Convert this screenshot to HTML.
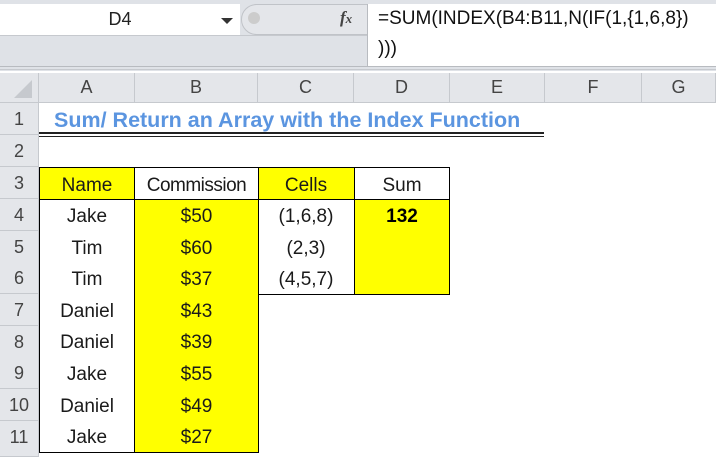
<!DOCTYPE html><html style="width:716px;height:457px;overflow:hidden"><head><style>
body{margin:0;width:716px;height:457px;overflow:hidden;background:#fff;font-family:"Liberation Sans",Calibri,sans-serif;position:relative}
div{position:absolute;box-sizing:border-box}
.t{font-size:19px;color:#1a1a1a;text-align:center;line-height:31.6px;white-space:nowrap}
.hd{background:#e4e6ea;border-right:1px solid #c6c9ce;border-bottom:1px solid #c6c9ce;color:#444;font-size:18px;text-align:center;line-height:29px}
.rh{background:#e4e6ea;border-bottom:1px solid #c6c9ce;border-right:1px solid #c6c9ce;color:#444;font-size:18px;text-align:center;width:39px;left:0;height:32px;line-height:32px}
</style></head><body>
<div style="left:0;top:0;width:716px;height:72px;background:#dfe2e7"></div>
<div style="left:0;top:4px;width:240px;height:31px;background:#fff;font-size:18px;text-align:center;line-height:31px;color:#222">D4</div>
<div style="left:221px;top:18px;width:0;height:0;border-left:6px solid transparent;border-right:6px solid transparent;border-top:6px solid #333"></div>
<div style="left:241px;top:4px;width:130px;height:31px;border:1px solid #c0c3c8;border-radius:16px 0 0 16px;background:#e4e6ea"></div>
<div style="left:248px;top:12px;width:12px;height:12px;border-radius:6px;background:#ccc"></div>
<div style="left:340px;top:8px;font:italic bold 17px 'Liberation Serif',serif;color:#444">f<span style="font-size:13px">x</span></div>
<div style="left:0;top:35px;width:371px;height:1px;background:#c6c9ce"></div>
<div style="left:367px;top:4px;width:1px;height:62px;background:#b8bbc0"></div>
<div style="left:368px;top:4px;width:348px;height:62px;background:#fff;font-size:19px;line-height:30px;padding-left:10px;color:#111;white-space:nowrap">=SUM(INDEX(B4:B11,N(IF(1,{1,6,8})<br>)))</div>
<div style="left:0;top:66px;width:716px;height:1px;background:#b8bbc0"></div>
<div style="left:0;top:69px;width:716px;height:1px;background:#c6c9ce"></div>
<div style="left:0;top:71px;width:716px;height:2px;background:#fff"></div>
<div class="hd" style="left:0;top:73px;width:39px;height:30px"></div>
<div style="left:14px;top:80px;width:0;height:0;border-left:18px solid transparent;border-bottom:18px solid #c6c9ce"></div>
<div class="hd" style="left:39px;top:73px;width:96px;height:30px">A</div>
<div class="hd" style="left:135px;top:73px;width:123px;height:30px">B</div>
<div class="hd" style="left:258px;top:73px;width:96px;height:30px">C</div>
<div class="hd" style="left:354px;top:73px;width:96px;height:30px">D</div>
<div class="hd" style="left:450px;top:73px;width:95px;height:30px">E</div>
<div class="hd" style="left:545px;top:73px;width:97px;height:30px">F</div>
<div class="hd" style="left:642px;top:73px;width:74px;height:30px">G</div>
<div class="rh" style="top:103px">1</div>
<div class="rh" style="top:135px">2</div>
<div class="rh" style="top:167px">3</div>
<div class="rh" style="top:199px">4</div>
<div class="rh" style="top:231px">5</div>
<div class="rh" style="top:262px">6</div>
<div class="rh" style="top:294px">7</div>
<div class="rh" style="top:326px">8</div>
<div class="rh" style="top:357px">9</div>
<div class="rh" style="top:389px">10</div>
<div class="rh" style="top:421px;height:36px">11</div>
<div style="left:54px;top:106px;font-size:21.5px;font-weight:bold;color:#5b95e0;line-height:28px;white-space:nowrap">Sum/ Return an Array with the Index Function</div>
<div style="left:39px;top:132px;width:505px;height:5px;border-top:2px solid #222;border-bottom:1px solid #222"></div>
<div style="left:39px;top:167px;width:96px;height:32px;background:#ff0"></div>
<div style="left:258px;top:167px;width:96px;height:32px;background:#ff0"></div>
<div style="left:135px;top:199px;width:123px;height:253px;background:#ff0"></div>
<div style="left:354px;top:199px;width:96px;height:95px;background:#ff0"></div>
<div style="left:39px;top:167px;width:411px;height:33px;border:1px solid #000"></div>
<div style="left:134px;top:167px;width:125px;height:286px;border:1px solid #000"></div>
<div style="left:39px;top:167px;width:96px;height:286px;border:1px solid #000"></div>
<div style="left:258px;top:167px;width:97px;height:128px;border:1px solid #000"></div>
<div style="left:354px;top:167px;width:96px;height:128px;border:1px solid #000"></div>
<div class="t" style="left:39px;top:170px;width:96px">Name</div>
<div class="t" style="left:135px;top:170px;width:123px;letter-spacing:-0.5px">Commission</div>
<div class="t" style="left:258px;top:170px;width:96px">Cells</div>
<div class="t" style="left:354px;top:170px;width:96px">Sum</div>
<div class="t" style="left:39px;top:201px;width:96px">Jake<br>Tim<br>Tim<br>Daniel<br>Daniel<br>Jake<br>Daniel<br>Jake</div>
<div class="t" style="left:135px;top:201px;width:123px">$50<br>$60<br>$37<br>$43<br>$39<br>$55<br>$49<br>$27</div>
<div class="t" style="left:258px;top:201px;width:96px">(1,6,8)<br>(2,3)<br>(4,5,7)</div>
<div class="t" style="left:354px;top:201px;width:96px;font-weight:bold;color:#000">132</div>
</body></html>
